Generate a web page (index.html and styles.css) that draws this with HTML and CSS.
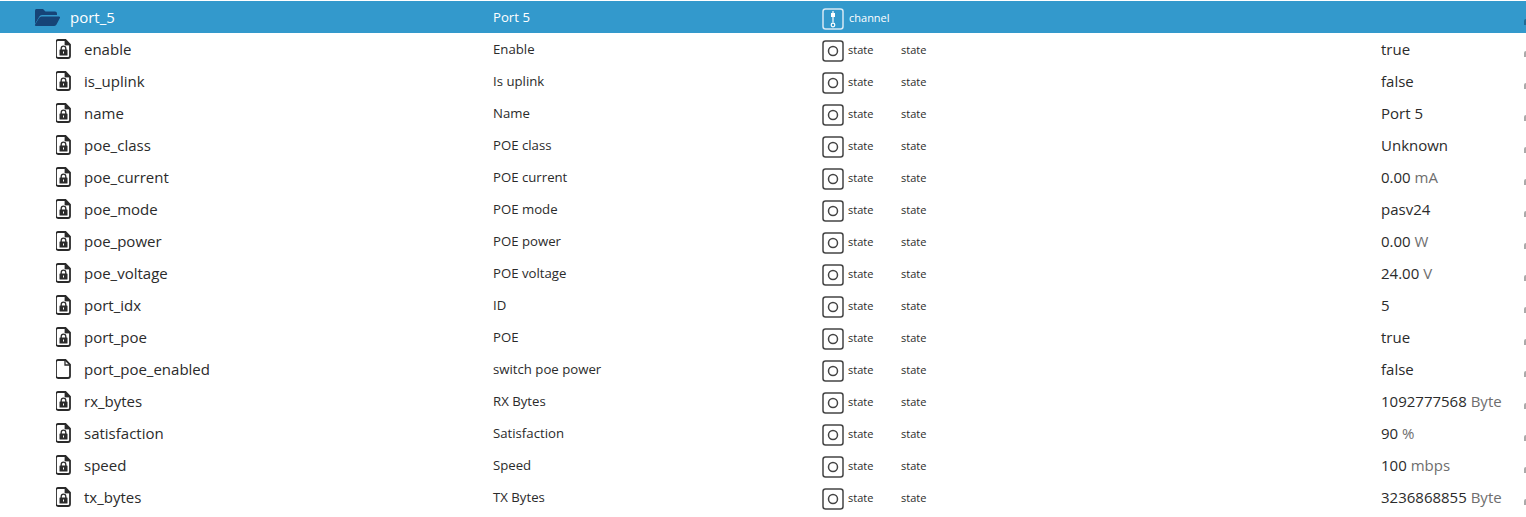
FILE: index.html
```html
<!DOCTYPE html>
<html lang="en">
<head>
<meta charset="utf-8">
<title>Objects</title>
<link rel="stylesheet" href="styles.css">
</head>
<body>
<svg class="defs" width="0" height="0" aria-hidden="true">
  <symbol id="locked" viewBox="0 0 15 20">
    <path d="M2 1h7.500l4.500 4.500v11.500a2 2 0 0 1-2 2h-10a2 2 0 0 1-2-2v-14a2 2 0 0 1 2-2z" fill="none" stroke="#2b2b2b" stroke-width="1.800"/>
    <path d="M9 1v5h5z" fill="#2b2b2b" stroke="#2b2b2b" stroke-width=".8"/>
    <path d="M5.200 11v-1.500a2.300 2.300 0 0 1 4.600 0v1.500" fill="none" stroke="#2b2b2b" stroke-width="1.300"/>
    <rect x="3.500" y="10.500" width="8" height="6" rx=".6" fill="#2b2b2b"/>
    <rect x="7" y="12.500" width="1" height="2" fill="#fff"/>
  </symbol>
  <symbol id="file" viewBox="0 0 15 20">
    <path d="M2 1h7.500l4.500 4.500v11.500a2 2 0 0 1-2 2h-10a2 2 0 0 1-2-2v-14a2 2 0 0 1 2-2z" fill="none" stroke="#2b2b2b" stroke-width="1.800"/>
    <path d="M9 1v5h5" fill="none" stroke="#2b2b2b" stroke-width="1.300"/>
  </symbol>
  <symbol id="state" viewBox="0 0 22 22">
    <rect x="1" y="1" width="20" height="20" rx="2.500" fill="none" stroke="#444" stroke-width="1.500"/>
    <circle cx="11" cy="11" r="4.500" fill="none" stroke="#444" stroke-width="1.500"/>
  </symbol>
  <symbol id="channel" viewBox="0 0 22 22">
    <rect x="1" y="1" width="20" height="20" rx="2.500" fill="none" stroke="#d5e8f4" stroke-width="1.500"/>
    <path d="M11 3v11.500" stroke="#fff" stroke-width="1.200"/>
    <rect x="9" y="5" width="4" height="4" fill="#fff"/>
    <circle cx="11" cy="17" r="1.800" fill="none" stroke="#fff" stroke-width="1.200"/>
  </symbol>
</svg>
<main class="tree">
  <div class="row row-open">
    <svg class="folder" viewBox="0 0 26 17"><path d="M2 0h7l2.500 2.500H21a2 2 0 0 1 2 2V6H8a3 3 0 0 0-2.800 1.800L1 15V2a2 2 0 0 1 1-2z" fill="#164477"/><path d="M7.500 7.500H25a1 1 0 0 1 .9 1.400L22.500 15.500a2.500 2.500 0 0 1-2.200 1.500H2a1 1 0 0 1-.9-1.400L5 9a3 3 0 0 1 2.500-1.500z" fill="#164477"/></svg>
    <span class="id">port_5</span>
    <span class="name">Port 5</span>
    <svg class="type"><use href="#channel"/></svg>
    <span class="kind">channel</span>
    <span class="edge edge-open"></span>
  </div>
  <div class="row"><svg class="file"><use href="#locked"/></svg><span class="id">enable</span><span class="name">Enable</span><svg class="type"><use href="#state"/></svg><span class="kind">state</span><span class="role">state</span><span class="val">true</span><span class="edge"></span></div>
  <div class="row"><svg class="file"><use href="#locked"/></svg><span class="id">is_uplink</span><span class="name">Is uplink</span><svg class="type"><use href="#state"/></svg><span class="kind">state</span><span class="role">state</span><span class="val">false</span><span class="edge"></span></div>
  <div class="row"><svg class="file"><use href="#locked"/></svg><span class="id">name</span><span class="name">Name</span><svg class="type"><use href="#state"/></svg><span class="kind">state</span><span class="role">state</span><span class="val">Port 5</span><span class="edge"></span></div>
  <div class="row"><svg class="file"><use href="#locked"/></svg><span class="id">poe_class</span><span class="name">POE class</span><svg class="type"><use href="#state"/></svg><span class="kind">state</span><span class="role">state</span><span class="val">Unknown</span><span class="edge"></span></div>
  <div class="row"><svg class="file"><use href="#locked"/></svg><span class="id">poe_current</span><span class="name">POE current</span><svg class="type"><use href="#state"/></svg><span class="kind">state</span><span class="role">state</span><span class="val">0.00 <em>mA</em></span><span class="edge"></span></div>
  <div class="row"><svg class="file"><use href="#locked"/></svg><span class="id">poe_mode</span><span class="name">POE mode</span><svg class="type"><use href="#state"/></svg><span class="kind">state</span><span class="role">state</span><span class="val">pasv24</span><span class="edge"></span></div>
  <div class="row"><svg class="file"><use href="#locked"/></svg><span class="id">poe_power</span><span class="name">POE power</span><svg class="type"><use href="#state"/></svg><span class="kind">state</span><span class="role">state</span><span class="val">0.00 <em>W</em></span><span class="edge"></span></div>
  <div class="row"><svg class="file"><use href="#locked"/></svg><span class="id">poe_voltage</span><span class="name">POE voltage</span><svg class="type"><use href="#state"/></svg><span class="kind">state</span><span class="role">state</span><span class="val">24.00 <em>V</em></span><span class="edge"></span></div>
  <div class="row"><svg class="file"><use href="#locked"/></svg><span class="id">port_idx</span><span class="name">ID</span><svg class="type"><use href="#state"/></svg><span class="kind">state</span><span class="role">state</span><span class="val">5</span><span class="edge"></span></div>
  <div class="row"><svg class="file"><use href="#locked"/></svg><span class="id">port_poe</span><span class="name">POE</span><svg class="type"><use href="#state"/></svg><span class="kind">state</span><span class="role">state</span><span class="val">true</span><span class="edge"></span></div>
  <div class="row"><svg class="file"><use href="#file"/></svg><span class="id">port_poe_enabled</span><span class="name">switch poe power</span><svg class="type"><use href="#state"/></svg><span class="kind">state</span><span class="role">state</span><span class="val">false</span><span class="edge"></span></div>
  <div class="row"><svg class="file"><use href="#locked"/></svg><span class="id">rx_bytes</span><span class="name">RX Bytes</span><svg class="type"><use href="#state"/></svg><span class="kind">state</span><span class="role">state</span><span class="val">1092777568 <em>Byte</em></span><span class="edge"></span></div>
  <div class="row"><svg class="file"><use href="#locked"/></svg><span class="id">satisfaction</span><span class="name">Satisfaction</span><svg class="type"><use href="#state"/></svg><span class="kind">state</span><span class="role">state</span><span class="val">90 <em>%</em></span><span class="edge"></span></div>
  <div class="row"><svg class="file"><use href="#locked"/></svg><span class="id">speed</span><span class="name">Speed</span><svg class="type"><use href="#state"/></svg><span class="kind">state</span><span class="role">state</span><span class="val">100 <em>mbps</em></span><span class="edge"></span></div>
  <div class="row"><svg class="file"><use href="#locked"/></svg><span class="id">tx_bytes</span><span class="name">TX Bytes</span><svg class="type"><use href="#state"/></svg><span class="kind">state</span><span class="role">state</span><span class="val">3236868855 <em>Byte</em></span><span class="edge"></span></div>
</main>
</body>
</html>
```
FILE: styles.css
```css
html, body { margin: 0; padding: 0; background: #fff; overflow: hidden; }
.defs { position: absolute; }
.tree { padding-top: 1px; font-family: "Open Sans", "Noto Sans", sans-serif; color: #2b2b2b; }
.row {
  display: grid;
  grid-template-columns: 56px 15px 13px 409px 329px 22px 4px 53px 480px 1fr 25px;
  grid-template-areas: "pad icon gap id name type g2 kind role val edge";
  height: 32px;
  align-items: center;
  white-space: nowrap;
}
.row-open { background: #3399cc; color: #fff; grid-template-columns: 34px 26px 10px 423px 329px 22px 5px 52px 480px 1fr 25px; }
.file { grid-area: icon; width: 15px; height: 20px; }
.folder { grid-area: icon; width: 26px; height: 17px; }
.id { grid-area: id; font-size: 15px; }
.name { grid-area: name; font-size: 13.2px; }
.type { grid-area: type; width: 22px; height: 22px; margin-top: 4px; }
.kind { grid-area: kind; font-size: 11px; }
.role { grid-area: role; font-size: 11px; }
.val { grid-area: val; font-size: 15px; min-width: 0; }
.val em { font-style: normal; color: #6e6e6e; }
.edge { grid-area: edge; justify-self: end; width: 2px; height: 6px; margin-top: 10px; background: #aaa; border-radius: 2px 0 0 0; }
.edge-open { background: #1f6a94; }
```
